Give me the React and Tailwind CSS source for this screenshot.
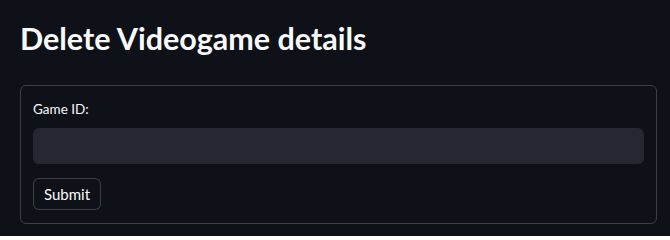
import React from "react";

export default function App() {
  return (
    <div className="min-h-[236px] w-full bg-[#0e1117] text-[#fafafa] pl-5 pr-[13px] pt-[18px]" style={{ fontFamily: "Lato, 'Noto Sans', sans-serif" }}>
      <h1 className="text-[30.5px] font-bold leading-[40px] mb-[27px]">Delete Videogame details</h1>
      <form
        className="border border-[rgba(250,250,250,0.2)] rounded-md px-3 pt-[13px] pb-[13px]"
        onSubmit={(e) => e.preventDefault()}
      >
        <label className="block text-[13.5px] leading-5 mb-[9px]">Game ID:</label>
        <input
          type="text"
          className="block w-full h-9 rounded-md bg-[#262730] outline-none px-3 text-[16px]"
        />
        <button
          type="submit"
          className="mt-[14px] h-8 px-[10px] rounded-md border border-[rgba(250,250,250,0.2)] bg-[#0e1117] text-[15px] leading-none"
        >
          Submit
        </button>
      </form>
    </div>
  );
}
